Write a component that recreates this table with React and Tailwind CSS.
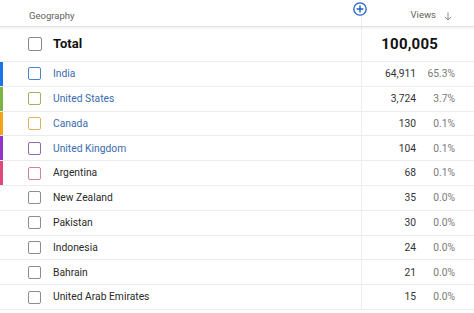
import React from "react";

const rows = [
  { name: "India", v: "64,911", p: "65.3%", bar: "bg-[#1a73e8]", box: "border-[#4a85c9]", link: true },
  { name: "United States", v: "3,724", p: "3.7%", bar: "bg-[#7cb342]", box: "border-[#9db35e]", link: true },
  { name: "Canada", v: "130", p: "0.1%", bar: "bg-[#f4a41a]", box: "border-[#ddb45e]", link: true },
  { name: "United Kingdom", v: "104", p: "0.1%", bar: "bg-[#9334c8]", box: "border-[#8d6ca8]", link: true },
  { name: "Argentina", v: "68", p: "0.1%", bar: "bg-[#e0487d]", box: "border-[#d47d9e]", link: false },
  { name: "New Zealand", v: "35", p: "0.0%" },
  { name: "Pakistan", v: "30", p: "0.0%" },
  { name: "Indonesia", v: "24", p: "0.0%" },
  { name: "Bahrain", v: "21", p: "0.0%" },
  { name: "United Arab Emirates", v: "15", p: "0.0%" },
];

export default function App() {
  return (
    <div
      className="w-[474px] h-[313px] bg-white overflow-hidden"
      style={{ fontFamily: "Roboto, 'Liberation Sans', sans-serif" }}
    >
      {/* header */}
      <div className="relative flex h-[27px] border-b border-[#e3e3e3] shadow-[0_1px_2px_rgba(0,0,0,0.08)] z-10">
        <div className="w-[361px] flex items-center pl-[29px] pt-[6px] text-[9.5px] text-[#5f5f5f]">
          Geography
        </div>
        <div className="flex-1 flex items-end pb-[4px] mt-[14px] border-l border-[#ececec] justify-end pr-[22px] text-[9.5px] text-[#5f5f5f]">
          <span>Views</span>
          <svg className="ml-[8px] mb-[1px]" width="8" height="9" viewBox="0 0 8 9" fill="none">
            <path d="M4 0.5V8M0.8 4.8L4 8L7.2 4.8" stroke="#8a8a8a" strokeWidth="1" />
          </svg>
        </div>
        <svg
          className="absolute left-[353px] top-[1.5px]"
          width="14"
          height="14"
          viewBox="0 0 14 14"
          fill="none"
        >
          <circle cx="7" cy="7" r="6.2" stroke="#1f5fbf" strokeWidth="1.3" fill="white" />
          <path d="M7 3.6V10.4M3.6 7H10.4" stroke="#1f5fbf" strokeWidth="1.4" />
        </svg>
      </div>

      {/* total */}
      <div className="flex h-[35px] border-b border-[#ededed]">
        <div className="w-[361px] flex items-center pl-[28px]">
          <div className="w-[14px] h-[14px] border-[1.5px] border-[#8a8a8a] rounded-[2px]" />
          <span className="ml-[11px] text-[13px] font-bold text-[#111]">Total</span>
        </div>
        <div className="flex-1 border-l border-[#ececec] flex items-center justify-end pr-[36px]">
          <span className="text-[15px] font-bold text-[#111] tracking-[0.2px]">100,005</span>
        </div>
      </div>

      {rows.map((r) => (
        <div key={r.name} className="flex h-[24.8px] border-b border-[#ececec]">
          <div className="w-[361px] flex items-center relative">
            <div className={`w-[3px] self-stretch ${r.bar || "bg-transparent"}`} />
            <div
              className={`ml-[25px] w-[13px] h-[13px] border-[1.5px] rounded-[2px] ${r.box || "border-[#8d8d8d]"}`}
            />
            <span
              className={`ml-[12px] text-[10.3px] ${r.link ? "text-[#3a6bb0]" : "text-[#2a2a2a]"}`}
            >
              {r.name}
            </span>
          </div>
          <div className="flex-1 border-l border-[#ececec] flex items-center justify-end pr-[19px] text-[10.3px]">
            <span className="text-[#333]">{r.v}</span>
            <span className="w-[39px] text-right text-[#7a7a7a]">{r.p}</span>
          </div>
        </div>
      ))}
    </div>
  );
}
